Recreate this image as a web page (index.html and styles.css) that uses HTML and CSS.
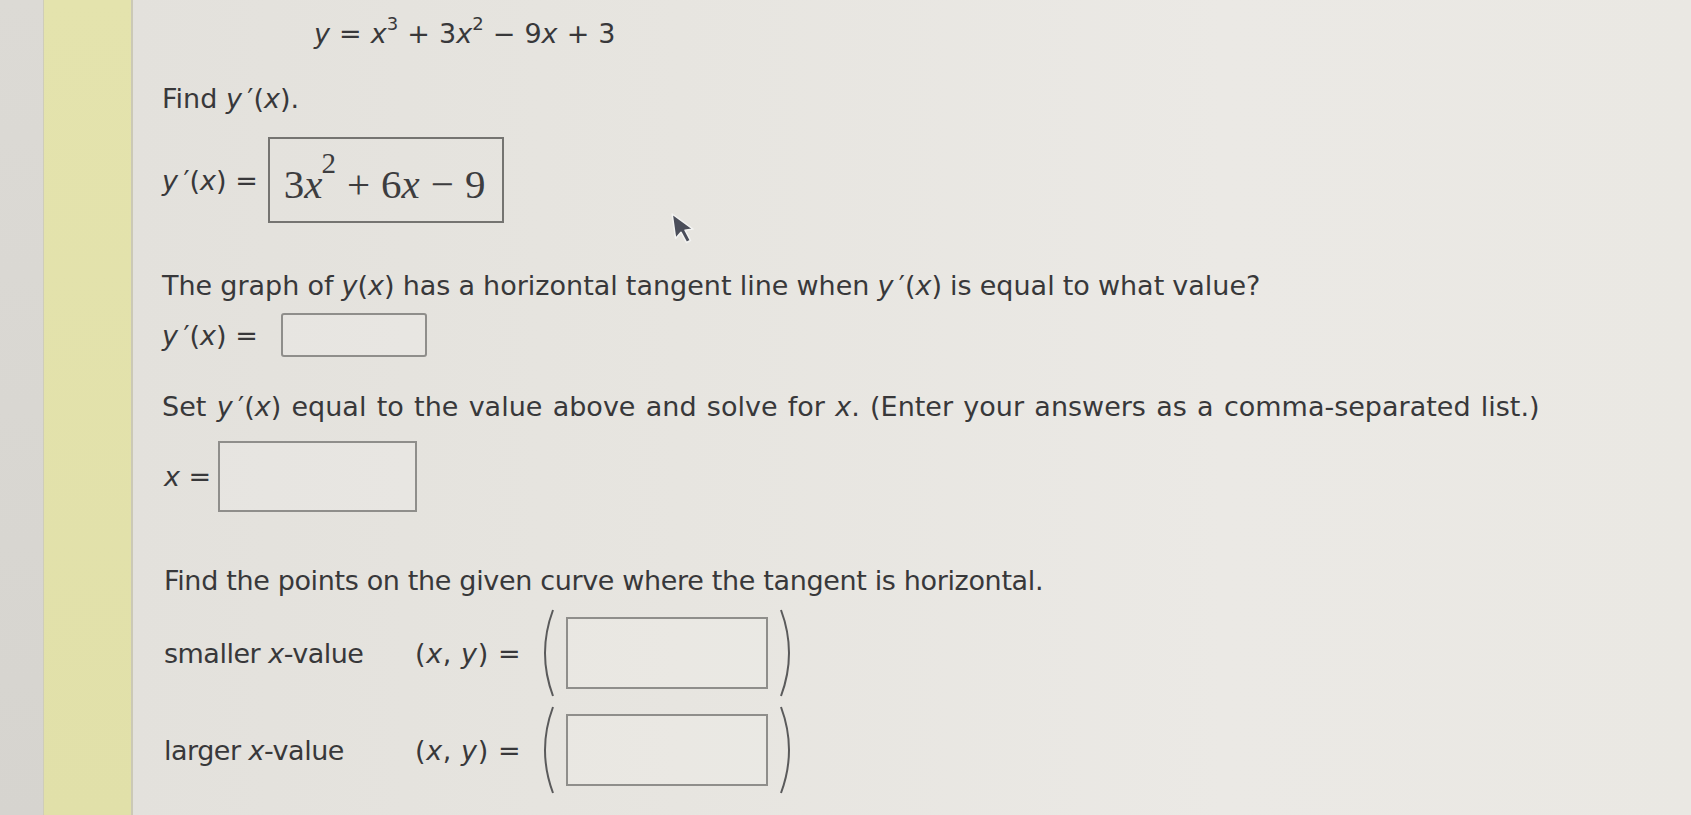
FILE: index.html
```html
<!DOCTYPE html>
<html lang="en">
<head>
  <meta charset="UTF-8">
  <title>Horizontal Tangent</title>
  <link rel="stylesheet" href="styles.css">
</head>
<body>

  <div class="gutter"></div>
  <div class="strip"></div>

  <div class="main">
    <div class="eq">
      <i>y</i> = <i>x</i><sup>3</sup> + 3<i>x</i><sup>2</sup> &minus; 9<i>x</i> + 3
    </div>

    <p class="line find">Find <i>y</i>&thinsp;&prime;(<i>x</i>).</p>

    <div class="row row-deriv">
      <span class="label"><i>y</i>&thinsp;&prime;(<i>x</i>) =</span>
      <div class="answer">
        3<i>x</i><sup>2</sup><span class="op">+</span>6<i>x</i><span class="op">&minus;</span>9
      </div>
    </div>

    <p class="line graph">The graph of <i>y</i>(<i>x</i>) has a horizontal tangent line when <i>y</i>&thinsp;&prime;(<i>x</i>) is equal to what value?</p>

    <div class="row row-value">
      <span class="label"><i>y</i>&thinsp;&prime;(<i>x</i>) =</span>
      <div class="box box-value"></div>
    </div>

    <p class="line set">Set <i>y</i>&thinsp;&prime;(<i>x</i>) equal to the value above and solve for <i>x</i>. (Enter your answers as a comma-separated list.)</p>

    <div class="row row-x">
      <span class="label"><i>x</i> =</span>
      <div class="box box-x"></div>
    </div>

    <p class="line points">Find the points on the given curve where the tangent is horizontal.</p>

    <div class="point point-small">
      <span class="point-name">smaller <i>x</i>-value</span>
      <span class="point-eq">(<i>x</i>, <i>y</i>) =</span>
      <svg class="paren" viewBox="0 0 22 90" width="22" height="90"><path d="M19 2 Q3 45 19 88" /></svg>
      <div class="box box-point"></div>
      <svg class="paren" viewBox="0 0 22 90" width="22" height="90"><path d="M3 2 Q19 45 3 88" /></svg>
    </div>

    <div class="point point-large">
      <span class="point-name">larger <i>x</i>-value</span>
      <span class="point-eq">(<i>x</i>, <i>y</i>) =</span>
      <svg class="paren" viewBox="0 0 22 90" width="22" height="90"><path d="M19 2 Q3 45 19 88" /></svg>
      <div class="box box-point"></div>
      <svg class="paren" viewBox="0 0 22 90" width="22" height="90"><path d="M3 2 Q19 45 3 88" /></svg>
    </div>
  </div>

  <!-- mouse pointer left on the page -->
  <svg class="cursor" viewBox="0 0 16 26" width="22" height="36">
    <path d="M1 1 L1 19 L5.5 15 L8.5 23 L11.5 21.8 L8.6 14 L14.5 14 Z" />
  </svg>

</body>
</html>
```

FILE: styles.css
```css
body {
  margin: 0;
  height: 815px;
  display: flex;
  overflow: hidden;
  font-family: 'DejaVu Sans', Verdana, sans-serif;
  font-size: 27px;
  color: #38383a;
  background: #e9e7e2;
}

.gutter {
  width: 43px;
  background: linear-gradient(180deg, #dcdad5, #d6d4cf);
}

.strip {
  width: 87px;
  background: linear-gradient(180deg, #e4e3ad, #e1e0a9);
  border-left: 1px solid #cfcdb9;
  border-right: 2px solid #cbc9b6;
}

.main {
  flex: 1;
  padding-left: 29px;
  background: linear-gradient(90deg, #e3e1dc 0%, #e7e5e0 35%, #ebe9e5 70%, #eae8e3 100%);
}

i {
  font-style: italic;
}

sup {
  font-size: 18px;
  line-height: 0;
  vertical-align: 13px;
}

.eq {
  height: 68px;
  line-height: 68px;
  padding-left: 152px;
  word-spacing: 0.5px;
}

.line {
  margin: 0;
  height: 40px;
  line-height: 40px;
  white-space: nowrap;
}

.find {
  margin-top: 11px;
}

.row {
  display: flex;
  align-items: center;
}

.label {
  white-space: nowrap;
}

.box {
  box-sizing: border-box;
  border: 2px solid #8f8e8b;
  background: rgba(255, 255, 255, 0.12);
}

/* derivative row */
.row-deriv {
  margin-top: 18px;
}

.row-deriv .label {
  margin-right: 10px;
}

.answer {
  box-sizing: border-box;
  width: 236px;
  height: 86px;
  border: 2px solid #757471;
  padding: 10px 0 0 14px;
  font-family: 'Liberation Serif', 'Times New Roman', serif;
  font-size: 41px;
  color: #3d3d3f;
  line-height: 70px;
  white-space: nowrap;
}

.answer sup {
  font-size: 29px;
  vertical-align: 25px;
  margin-left: -1px;
}

.answer .op {
  margin: 0 11px;
}

.graph {
  margin-top: 43px;
  word-spacing: -0.5px;
}

.row-value {
  margin-top: 7px;
}

.row-value .label {
  margin-right: 23px;
}

.box-value {
  width: 146px;
  height: 44px;
  border-radius: 3px;
}

.set {
  margin-top: 30px;
  word-spacing: 1.7px;
}

.row-x {
  margin-top: 14px;
}

.row-x .label {
  margin-left: 2px;
  margin-right: 7px;
}

.box-x {
  width: 199px;
  height: 71px;
}

.points {
  margin-top: 49px;
  margin-left: 2px;
  letter-spacing: -0.35px;
}

/* point rows */
.point {
  display: flex;
  align-items: center;
  margin-left: 2px;
  height: 92px;
}

.point-small {
  margin-top: 6px;
}

.point-large {
  margin-top: 5px;
}

.point-name {
  width: 251px;
  white-space: nowrap;
  letter-spacing: -0.5px;
}

.point-eq {
  width: 119px;
  white-space: nowrap;
  letter-spacing: 0.6px;
}

.paren path {
  fill: none;
  stroke: #5a5a5b;
  stroke-width: 2;
}

.box-point {
  width: 202px;
  height: 72px;
  margin: 0 10px;
}

.cursor {
  position: absolute;
  left: 673px;
  top: 211px;
  transform: rotate(-8deg);
}

.cursor path {
  fill: #4b4e5a;
  stroke: #f4f4f2;
  stroke-width: 1.1;
  stroke-linejoin: round;
}
```
